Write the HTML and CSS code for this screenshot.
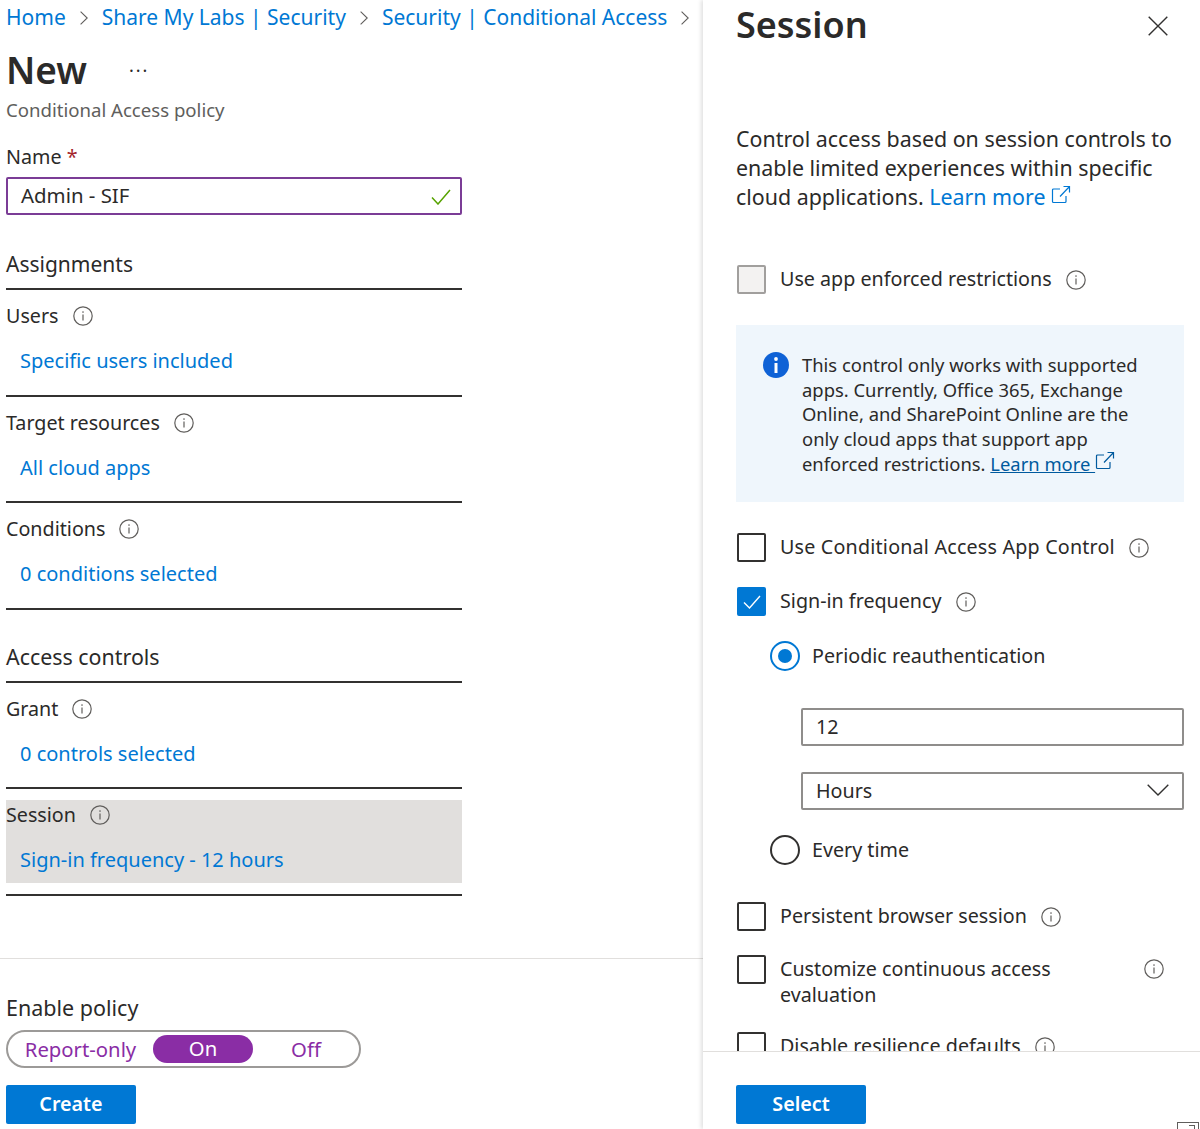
FILE: index.html
```html
<!DOCTYPE html>
<html lang="en">
<head>
  <meta charset="UTF-8">
  <meta name="viewport" content="width=device-width, initial-scale=1.0">
  <title>New - Conditional Access policy</title>
  <link rel="stylesheet" href="styles.css">
</head>
<body>
  <svg class="sprites" width="0" height="0">
    <symbol id="info" viewBox="0 0 20 20">
      <circle cx="10" cy="10" r="9.2" fill="none" stroke="#605e5c" stroke-width="1.2"/>
      <path d="M10 8.6v6" stroke="#605e5c" stroke-width="1.2"/>
      <circle cx="10" cy="6.1" r=".8" fill="#605e5c"/>
    </symbol>
    <symbol id="ext" viewBox="0 0 20 20">
      <path d="M9 4H2.500a1 1 0 0 0-1 1v11.500a1 1 0 0 0 1 1H14a1 1 0 0 0 1-1V11M9 11.500 18.500 1.500M12.500 1.500h6v6" fill="none" stroke="currentColor" stroke-width="1.2"/>
    </symbol>
    <symbol id="crumb" viewBox="0 0 8 14">
      <path d="M.6.6 7.200 7 .6 13.400" fill="none" stroke="#605e5c" stroke-width="1.100"/>
    </symbol>
  </svg>

  <div class="page">
    <!-- 左边：策略表单 -->
    <main class="policy">
      <nav class="crumbs">
        <a href="#">Home</a><svg class="crumb-sep"><use href="#crumb"/></svg>
        <a href="#">Share My Labs | Security</a><svg class="crumb-sep"><use href="#crumb"/></svg>
        <a href="#">Security | Conditional Access</a><svg class="crumb-sep"><use href="#crumb"/></svg>
      </nav>
      <div class="title-row">
        <h1 class="title">New</h1>
        <span class="more">···</span>
      </div>
      <div class="subtitle">Conditional Access policy</div>

      <div class="field-label">Name <span class="req">*</span></div>
      <div class="name-input">
        <span>Admin - SIF</span>
        <svg class="ok" viewBox="0 0 20 16"><path d="M1 8.500 7 15 19 1" fill="none" stroke="#57a300" stroke-width="1.500"/></svg>
      </div>

      <h2 class="group-head group-assign">Assignments</h2>
      <div class="sel-item">
        <div class="sel-label">Users <svg class="info"><use href="#info"/></svg></div>
        <a class="sel-link" href="#">Specific users included</a>
      </div>
      <div class="sel-item">
        <div class="sel-label">Target resources <svg class="info"><use href="#info"/></svg></div>
        <a class="sel-link" href="#">All cloud apps</a>
      </div>
      <div class="sel-item">
        <div class="sel-label">Conditions <svg class="info"><use href="#info"/></svg></div>
        <a class="sel-link" href="#">0 conditions selected</a>
      </div>

      <h2 class="group-head group-access">Access controls</h2>
      <div class="sel-item">
        <div class="sel-label">Grant <svg class="info"><use href="#info"/></svg></div>
        <a class="sel-link" href="#">0 controls selected</a>
      </div>
      <div class="sel-item sel-item-active">
        <div class="sel-hl">
          <div class="sel-label">Session <svg class="info"><use href="#info"/></svg></div>
          <a class="sel-link" href="#">Sign-in frequency - 12 hours</a>
        </div>
      </div>

      <footer class="policy-foot">
        <div class="field-label enable-label">Enable policy</div>
        <div class="toggle">
          <span>Report-only</span>
          <span class="toggle-on">On</span>
          <span>Off</span>
        </div>
        <button class="btn">Create</button>
      </footer>
    </main>

    <!-- 右边：Session 面板 -->
    <aside class="panel">
      <div class="panel-scroll">
        <div class="panel-head">
          <h1 class="title title-panel">Session</h1>
          <svg class="close" viewBox="0 0 20 20"><path d="M.7.7l18.600 18.600M19.300.7.7 19.300" fill="none" stroke="#323130" stroke-width="1.400"/></svg>
        </div>
        <p class="intro">Control access based on session controls to enable limited experiences within specific cloud applications. <a href="#">Learn more <svg class="ext"><use href="#ext"/></svg></a></p>

        <div class="check-row row-app">
          <i class="box box-disabled"></i>
          <span>Use app enforced restrictions</span>
          <svg class="info"><use href="#info"/></svg>
        </div>

        <div class="notice">
          <svg class="notice-icon" viewBox="0 0 26 26"><circle cx="13" cy="13" r="13" fill="#0f62d6"/><circle cx="13" cy="7" r="1.900" fill="#fff"/><path d="M13 11v10" stroke="#fff" stroke-width="3"/></svg>
          <p>This control only works with supported apps. Currently, Office 365, Exchange Online, and SharePoint Online are the only cloud apps that support app enforced restrictions. <a href="#">Learn more <svg class="ext"><use href="#ext"/></svg></a></p>
        </div>

        <div class="check-row row-caac">
          <i class="box"></i>
          <span>Use Conditional Access App Control</span>
          <svg class="info"><use href="#info"/></svg>
        </div>
        <div class="check-row row-freq">
          <i class="box box-on"><svg viewBox="0 0 18 14"><path d="M1 7.500 6.500 13 17 1" fill="none" stroke="#fff" stroke-width="1.400"/></svg></i>
          <span>Sign-in frequency</span>
          <svg class="info"><use href="#info"/></svg>
        </div>

        <div class="radio-row row-periodic"><i class="radio radio-on"></i><span>Periodic reauthentication</span></div>
        <div class="text-box row-num">12</div>
        <div class="text-box row-unit">
          <span>Hours</span>
          <svg class="chev" viewBox="0 0 22 12"><path d="M.7.7 11 11 21.300.7" fill="none" stroke="#323130" stroke-width="1.400"/></svg>
        </div>
        <div class="radio-row row-every"><i class="radio"></i><span>Every time</span></div>

        <div class="check-row row-persist">
          <i class="box"></i>
          <span>Persistent browser session</span>
          <svg class="info"><use href="#info"/></svg>
        </div>
        <div class="check-row row-cae">
          <i class="box"></i>
          <span class="cae-text">Customize continuous access evaluation</span>
          <svg class="info"><use href="#info"/></svg>
        </div>
        <div class="check-row row-resil">
          <i class="box"></i>
          <span>Disable resilience defaults</span>
          <svg class="info"><use href="#info"/></svg>
        </div>
      </div>
      <footer class="panel-foot">
        <button class="btn">Select</button>
        <i class="resize"></i>
      </footer>
    </aside>
  </div>
</body>
</html>
```

FILE: styles.css
```css
*{
  box-sizing: border-box;
}
html, body{
  margin: 0;
  height: 100%;
  overflow: hidden;
}
body{
  background: #fff;
  color: #2b2a29;
  font-family: "Noto Sans", "Open Sans", sans-serif;
  font-size: 19.7px;
}
a{
  color: #0078d4;
  text-decoration: none;
}
h1, h2, p{
  margin: 0;
  font-weight: normal;
}
.sprites{
  position: absolute;
}
.page{
  display: flex;
  height: 1129px;
}

/* 左边 */
.policy{
  display: flex;
  flex-direction: column;
  width: 703px;
  padding-left: 6px;
  overflow: hidden;
}
.crumbs{
  display: flex;
  align-items: center;
  height: 34px;
  font-size: 21px;
  white-space: nowrap;
}
.crumb-sep{
  flex: none;
  width: 8px;
  height: 14px;
  margin: 2px 14px 0 14px;
}
.title-row{
  display: flex;
  align-items: center;
  height: 40px;
  margin-top: 16px;
  margin-bottom: 1px;
}
.title{
  font-size: 37px;
  font-weight: 600;
  line-height: 40px;
}
.title-panel{
  font-size: 36px;
}
.more{
  margin-left: 42px;
  font-size: 18px;
  letter-spacing: 2px;
}
.subtitle{
  height: 28px;
  margin-top: 5px;
  color: #605e5c;
  font-size: 18.6px;
  line-height: 28px;
}
.field-label{
  height: 28px;
  margin-top: 19px;
  line-height: 28px;
}
.req{
  color: #a4262c;
}
.name-input{
  display: flex;
  align-items: center;
  justify-content: space-between;
  width: 456px;
  height: 38px;
  margin-top: 6px;
  padding: 0 9px 2px 13px;
  border: 2px solid #7b3c96;
  border-radius: 2px;
  font-size: 20.4px;
}
.ok{
  width: 20px;
  height: 16px;
  margin-top: 3px;
}
.group-head{
  width: 456px;
  height: 40px;
  border-bottom: 2px solid #323130;
  font-size: 21px;
  line-height: 28px;
}
.group-assign{
  margin-top: 35px;
}
.group-access{
  margin-top: 33px;
  font-size: 21.4px;
}
.sel-item{
  flex: none;
  width: 456px;
  height: 106.5px;
  padding-top: 12px;
  border-bottom: 2px solid #323130;
}
.sel-label{
  display: flex;
  align-items: center;
  height: 28px;
  line-height: 28px;
}
.sel-label .info{
  margin-left: 14px;
}
.sel-link{
  display: block;
  height: 28px;
  margin-top: 17px;
  padding-left: 14px;
  font-size: 20px;
  line-height: 28px;
}
.sel-item-active{
  padding-top: 11px;
}
.sel-hl{
  height: 83px;
  padding-top: 1px;
  background: #e1dfdd;
}
.info{
  flex: none;
  width: 20px;
  height: 20px;
}
.policy-foot{
  flex: none;
  height: 171px;
  margin: auto 0 0 -6px;
  padding-left: 6px;
  border-top: 1px solid #e1dfdd;
}
.enable-label{
  margin-top: 35px;
  font-size: 21.5px;
}
.toggle{
  display: grid;
  grid-template-columns: 145px 100px 1fr;
  align-items: center;
  width: 355px;
  height: 38px;
  margin-top: 8px;
  border: 2px solid #9c9a98;
  border-radius: 19px;
  color: #8a2da5;
  font-size: 20.3px;
  text-align: center;
}
.toggle span{
  line-height: 26px;
}
.toggle-on{
  height: 28px;
  border-radius: 14px;
  background: #8a2da5;
  color: #fff;
}
.btn{
  display: block;
  width: 130px;
  height: 39px;
  margin-top: 17px;
  padding: 0 0 2px;
  border: 0;
  border-radius: 2px;
  background: #0078d4;
  color: #fff;
  font-family: inherit;
  font-size: 19.7px;
  font-weight: 600;
}

/* 右边面板 */
.panel{
  display: flex;
  flex-direction: column;
  width: 497px;
  box-shadow: -2px 0 4px rgba(0, 0, 0, .12);
}
.panel-scroll{
  height: 1051px;
  padding: 0 16px 0 33px;
  overflow: hidden;
}
.panel-head{
  display: flex;
  align-items: center;
  justify-content: space-between;
  height: 40px;
  margin-top: 5px;
  margin-bottom: 1px;
  padding-right: 16px;
}
.close{
  width: 20px;
  height: 20px;
  margin-top: 1px;
}
.intro{
  margin-top: 79px;
  font-size: 21.4px;
  line-height: 29px;
}
.ext{
  width: 20px;
  height: 20px;
  vertical-align: 0;
}
.check-row{
  display: flex;
  align-items: center;
  min-height: 29px;
}
.check-row span,
.radio-row span{
  margin-bottom: 2px;
}
.check-row .info{
  margin-left: 14px;
}
.box{
  flex: none;
  width: 29px;
  height: 29px;
  margin: 0 14px 0 1px;
  border: 2px solid #323130;
  border-radius: 2px;
}
.box-disabled{
  border-color: #a19f9d;
  background: #f3f2f1;
}
.box-on{
  display: flex;
  align-items: center;
  justify-content: center;
  border-color: #0078d4;
  background: #0078d4;
}
.box-on svg{
  width: 18px;
  height: 14px;
}
.row-app{
  margin-top: 54px;
}
.notice{
  display: flex;
  height: 177px;
  margin-top: 31px;
  padding: 27px 0 0 27px;
  background: #eff6fc;
  font-size: 18.4px;
  line-height: 24.5px;
}
.notice-icon{
  flex: none;
  width: 26px;
  height: 26px;
  margin-right: 13px;
}
.notice p{
  width: 350px;
  margin-top: 1px;
}
.notice a{
  color: #005a9e;
  text-decoration: underline;
}
.row-caac{
  margin-top: 31px;
  letter-spacing: .2px;
}
.row-freq{
  margin-top: 25px;
}
.radio-row{
  display: flex;
  align-items: center;
  height: 30px;
  margin-left: 34px;
}
.radio{
  display: flex;
  flex: none;
  align-items: center;
  justify-content: center;
  width: 30px;
  height: 30px;
  margin-right: 12px;
  border: 2px solid #323130;
  border-radius: 50%;
}
.radio-on{
  border-color: #0078d4;
}
.radio-on:after{
  content: '';
  width: 14px;
  height: 14px;
  border-radius: 50%;
  background: #0078d4;
}
.row-periodic{
  margin-top: 25px;
}
.text-box{
  display: flex;
  align-items: center;
  justify-content: space-between;
  height: 38px;
  margin-left: 65px;
  padding: 0 13px 2px;
  border: 2px solid #8f8d8b;
  border-radius: 2px;
}
.row-num{
  margin-top: 37px;
}
.row-unit{
  margin-top: 26px;
}
.chev{
  width: 22px;
  height: 12px;
}
.row-every{
  margin-top: 25px;
}
.row-persist{
  margin-top: 37px;
}
.row-cae{
  align-items: flex-start;
  margin-top: 24px;
  line-height: 26px;
}
.row-cae .info{
  margin-top: 4px;
}
.cae-text{
  width: 350px;
  margin-top: 1px;
}
.row-resil{
  margin-top: 22px;
}
.panel-foot{
  position: relative;
  flex: none;
  height: 78px;
  padding-left: 33px;
  border-top: 1px solid #e1dfdd;
}
.panel-foot .btn{
  margin-top: 33px;
}
.resize{
  position: absolute;
  top: 70px;
  left: 474px;
  width: 22px;
  height: 12px;
  border: 1.5px solid #605e5c;
  border-bottom: 0;
}
.resize:after{
  content: '';
  position: absolute;
  top: 2px;
  right: 3px;
  width: 5px;
  height: 5px;
  border-top: 1.5px solid #605e5c;
  border-right: 1.5px solid #605e5c;
}
```
